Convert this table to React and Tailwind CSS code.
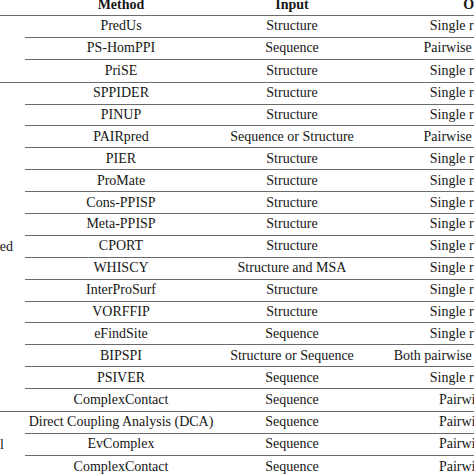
import React from "react";

const groups = [
  {
    label: "",
    labelPad: "pr-[12px]",
    rows: [
      ["PredUs", "Structure", "Single residue level"],
      ["PS-HomPPI", "Sequence", "Pairwise residue level"],
      ["PriSE", "Structure", "Single residue level"],
    ],
  },
  {
    label: "Structure-based",
    labelPad: "pr-[12px]",
    rows: [
      ["SPPIDER", "Structure", "Single residue level"],
      ["PINUP", "Structure", "Single residue level"],
      ["PAIRpred", "Sequence or Structure", "Pairwise residue level"],
      ["PIER", "Structure", "Single residue level"],
      ["ProMate", "Structure", "Single residue level"],
      ["Cons-PPISP", "Structure", "Single residue level"],
      ["Meta-PPISP", "Structure", "Single residue level"],
      ["CPORT", "Structure", "Single residue level"],
      ["WHISCY", "Structure and MSA", "Single residue level"],
      ["InterProSurf", "Structure", "Single residue level"],
      ["VORFFIP", "Structure", "Single residue level"],
      ["eFindSite", "Sequence", "Single residue level"],
      ["BIPSPI", "Structure or Sequence", "Both pairwise and single residue"],
      ["PSIVER", "Sequence", "Single residue level"],
      ["ComplexContact", "Sequence", "Pairwise residue"],
    ],
  },
  {
    label: "Co-evolutional",
    labelPad: "pr-[21px]",
    rows: [
      ["Direct Coupling Analysis (DCA)", "Sequence", "Pairwise residue"],
      ["EvComplex", "Sequence", "Pairwise residue"],
      ["ComplexContact", "Sequence", "Pairwise residue"],
    ],
  },
];

function Row({ cells, last }) {
  return (
    <div
      className={`grid grid-cols-[192px_150px_236px] h-[21.9px] items-center ${
        last ? "" : "border-b border-[#6b6b6b]"
      }`}
    >
      {cells.map((c, i) => (
        <div key={i} className="flex justify-center whitespace-nowrap">
          <span className="shrink-0">{c}</span>
        </div>
      ))}
    </div>
  );
}

export default function App() {
  return (
    <div
      className="w-[474px] h-[474px] overflow-hidden bg-white text-[#161616] text-[14px] leading-none"
      style={{ fontFamily: '"Liberation Serif", "Times New Roman", serif' }}
    >
      <div className="w-[603px] -mt-[5px]">
        {/* header */}
        <div className="grid grid-cols-[25px_192px_150px_236px] h-[21px] items-center border-b border-[#6b6b6b] font-bold">
          <div />
          <div className="text-center">Method</div>
          <div className="text-center">Input</div>
          <div className="text-center">Output</div>
        </div>

        {groups.map((g, gi) => (
          <div key={gi} className="flex border-b border-[#6b6b6b]">
            <div
              className={`w-[25px] shrink-0 overflow-hidden flex items-center justify-end ${g.labelPad}`}
            >
              <span className="shrink-0 whitespace-nowrap">{g.label}</span>
            </div>
            <div className="flex-1">
              {g.rows.map((r, ri) => (
                <Row key={ri} cells={r} last={ri === g.rows.length - 1} />
              ))}
            </div>
          </div>
        ))}
      </div>
    </div>
  );
}
